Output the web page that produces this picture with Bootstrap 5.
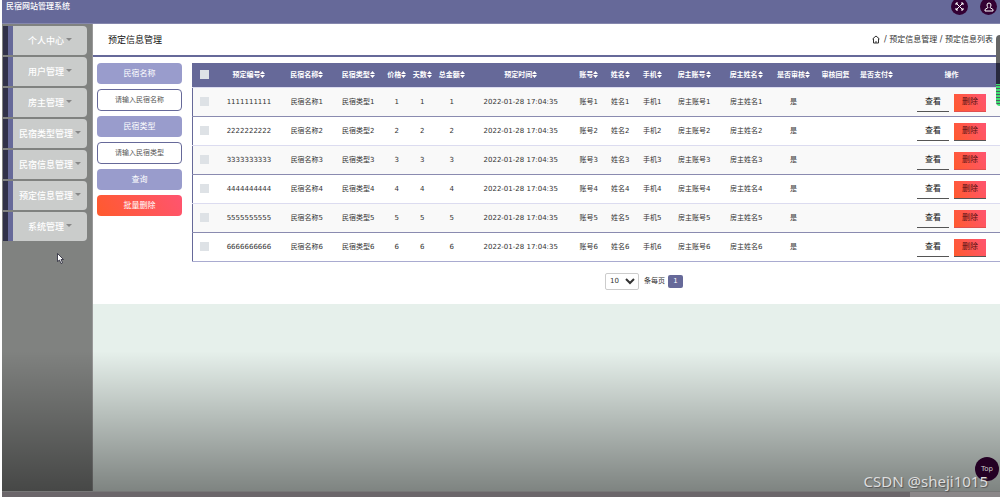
<!DOCTYPE html>
<html lang="zh-CN">
<head>
<meta charset="utf-8">
<meta name="viewport" content="width=device-width, initial-scale=1">
<title>民宿网站管理系统</title>
<link href="https://cdn.jsdelivr.net/npm/bootstrap@5.3.0/dist/css/bootstrap.min.css" rel="stylesheet">
<style>
:root{--brand:#666999;--soft:#999ccc;--plum:#330033}
body{font-family:"DejaVu Sans","Noto Sans CJK SC",sans-serif;font-size:7px;line-height:10px;color:#333;background:#fff}
.shell{min-height:100vh;padding:0 4px 2px 2px;overflow:hidden}
.topbar{background:var(--brand);height:24px;border-bottom:1px solid #8587ad;padding:0 3px 0 4px}
.brand-name{font-size:8px;line-height:14px;font-weight:500;color:#fff}
.tools{gap:12px}
.round-btn,.round-btn:hover{width:17px;height:17px;background:var(--plum);color:#fff;margin-top:-2px}
.side{width:91px;background:#808280;border-right:1px solid #999;padding:2px 5px 0 1px;gap:2px}
.side-link{height:29px;font-size:9px;line-height:12px;font-weight:500;color:#fff;background:#cacccb;border:0;border-left:5px solid var(--brand);border-radius:0 4px 4px 0;flex:1}
.side-item{background:linear-gradient(90deg,#303149 5px,transparent 5px);padding-left:5px}
.side-link::after{color:#888;border-top-width:3px;border-left-width:3px;border-right-width:3px;margin-left:2px}
.panel{background:#fff;padding-bottom:14px}
.crumbs{height:33px;border-bottom:2px solid var(--brand);padding:0 7px 0 15px}
.page-title{font-size:9px;line-height:12px;color:#111}
.crumb-list{font-size:8px;line-height:12px;color:#333}
.crumb-list a{color:#333}
.work{padding:6px 0 0 4px;gap:10px}
.filters{width:85px;gap:5px}
.pill{height:21px;border:0;border-radius:4px;background:var(--soft);color:#fff;font-size:8px;line-height:12px}
.field{height:22px;border:1px solid var(--brand);border-radius:4px;font-size:7px;text-align:center;padding:0 4px;color:#444;width:100%}
.field::placeholder{color:#555}
.danger-fill{background:linear-gradient(60deg,#ff5a2d,#ff5470)}
.orders{table-layout:fixed;width:100%;border-collapse:collapse;text-align:center;border-left:1px solid var(--brand)}
.orders th{background:var(--brand);color:#fff;height:24px;padding:0;white-space:nowrap;font-weight:700}
.orders td{height:29px;padding:0;white-space:nowrap;border-bottom:1px solid #dcdcf0;border-top:1px solid #dcdcf0}
.orders tbody tr:nth-child(odd) td{background:#f9f9f9;border-bottom-color:#8a8bb0}
.orders tbody tr:nth-child(even) td{border-top-color:#8a8bb0}
.orders tbody tr:last-child td{border-bottom-color:#a9abd0}
.orders th:last-child,.orders td:last-child{padding-left:6px}
.tick{appearance:none;width:9px;height:9px;background:#dee2e6;display:block;margin:0 auto}
.sorter{width:5px;height:7px;vertical-align:-1px}
.row-btn{width:32px;height:18px;border:0;border-bottom:1px solid #555;background:transparent;color:#111;font-size:8px;line-height:12px;padding:0}
.row-btn.danger-fill{background:linear-gradient(60deg,#ff5a2d,#ff5470);color:#511}
.orders tbody tr:nth-child(odd) .danger-fill{border-bottom-color:#e05050}
.actions{gap:5px;padding-top:2px}
.pager{margin-top:11px;padding-left:96px}
.size-pick{width:34px;height:17px;font-size:7px;border:1px solid #ccc;border-radius:2px;background:#fff;color:#333;padding:0;margin-right:5px}
.page-no{width:15px;height:13px;border:0;border-radius:2px;background:var(--brand);color:#fff;padding:0;margin-left:3px}
.ground{background:#e6f0eb}
.dim{height:140px;bottom:8px;left:2px;right:4px;background:linear-gradient(rgba(0,0,0,0),rgba(0,0,0,.45));pointer-events:none}
.hbar{height:6px;background:linear-gradient(90deg,#6b666a 91%,#8b8789 91%);border-top:1px solid #777}
.gauge{right:4px;top:35px;width:4px;height:71px;border-radius:4px 0 0 4px;background:linear-gradient(#666 0 28px,#28293d 28px 49px,transparent 49px),repeating-linear-gradient(#3fe070 0 2px,#556 2px 3px)}
.to-top,.to-top:hover{right:5px;bottom:18px;width:24px;height:24px;background:#240024;color:#ccc;font-size:7px;line-height:10px}
.credit{right:16px;bottom:8px;font:15px/20px "Noto Sans",sans-serif;color:#ddd;text-shadow:1px 1px 1px #555}
.pointer{left:57px;top:253px;width:7px;height:11px}
</style>
</head>
<body>
<div class="shell d-flex flex-column position-relative">
  <header class="topbar d-flex justify-content-between align-items-start">
    <span class="brand-name">民宿网站管理系统</span>
    <div class="tools d-flex">
      <button class="round-btn btn rounded-circle p-0 d-flex align-items-center justify-content-center" aria-label="全屏"><svg width="9" height="9" viewBox="0 0 9 9" fill="none" stroke="currentColor"><path d="M1 1l7 7M8 1L1 8M1 3V1h2M6 1h2v2M8 6v2H6M3 8H1V6"/></svg></button>
      <button class="round-btn btn rounded-circle p-0 d-flex align-items-center justify-content-center" aria-label="用户"><svg width="10" height="10" viewBox="0 0 10 10" fill="none" stroke="currentColor"><path d="M5 1a2 2 0 0 1 2 2c0 1-.5 2-1 2.500L9 7.500V9H1V7.500L4 5.500C3.500 5 3 4 3 3a2 2 0 0 1 2-2z"/></svg></button>
    </div>
  </header>
  <div class="d-flex flex-grow-1">
    <nav class="side d-flex flex-column flex-shrink-0" id="side"></nav>
    <main class="ground flex-grow-1 d-flex flex-column">
      <section class="panel">
        <div class="crumbs d-flex justify-content-between align-items-center">
          <h1 class="page-title m-0 fw-normal">预定信息管理</h1>
          <div class="crumb-list d-flex align-items-center gap-1"><a href="#" aria-label="首页" class="d-flex"><svg width="8" height="9" viewBox="0 0 8 9" fill="none" stroke="currentColor"><path d="M.5 4L4 1l3.500 3M1.500 3.500v4.500h5V3.500M4 8V6"/></svg></a><span>/ <a href="#" class="text-decoration-none">预定信息管理</a> / 预定信息列表</span></div>
        </div>
        <div class="d-flex work">
          <form class="filters d-flex flex-column flex-shrink-0">
            <label class="pill d-flex align-items-center justify-content-center" for="f-name">民宿名称</label>
            <input class="field" id="f-name" placeholder="请输入民宿名称">
            <label class="pill d-flex align-items-center justify-content-center" for="f-type">民宿类型</label>
            <input class="field" id="f-type" placeholder="请输入民宿类型">
            <button class="pill" type="button">查询</button>
            <button class="pill danger-fill" type="button">批量删除</button>
          </form>
          <div class="flex-grow-1">
            <table class="orders"><colgroup id="cols"></colgroup><thead><tr id="heads"></tr></thead><tbody id="rows"></tbody></table>
            <div class="pager d-flex justify-content-center align-items-center">
              <select class="size-pick" id="size"><option>10</option></select>
              <label for="size">条每页</label>
              <button class="page-no">1</button>
            </div>
          </div>
        </div>
      </section>
    </main>
  </div>
  <div class="hbar"></div>
  <div class="dim position-absolute"></div>
  <div class="gauge position-absolute"></div>
  <svg class="pointer position-absolute" viewBox="0 0 7 11"><path d="M.5 .5v8l2-1.500L4 10.500l1.500-.7L4 6.500h2.500z" fill="#fff" stroke="#223" stroke-width=".8"/></svg>
  <button class="to-top position-absolute btn rounded-circle p-0 d-flex align-items-center justify-content-center">Top</button>
  <div class="credit position-absolute">CSDN @sheji1015</div>
</div>
<script src="https://cdn.jsdelivr.net/npm/bootstrap@5.3.0/dist/js/bootstrap.bundle.min.js"></script>
<script>
const menu=['个人中心','用户管理','房主管理','民宿类型管理','民宿信息管理','预定信息管理','系统管理'];
document.getElementById('side').innerHTML=menu.map(t=>`<div class="side-item d-flex"><button class="side-link dropdown-toggle p-0">${t}</button></div>`).join('');
const cols=[['',24],['预定编号',65],['民宿名称',51],['民宿类型',52],['价格',25],['天数',26],['总金额',33],['预定时间',105],['账号',31],['姓名',32],['手机',32],['房主账号',52],['房主姓名',52],['是否审核',43],['审核回复',41],['是否支付',41],['操作',0]];
const sorter='<svg class="sorter" viewBox="0 0 5 7" fill="currentColor"><path d="M0 3l2.500-3L5 3zM0 4h5L2.500 7z"/></svg>';
document.getElementById('cols').innerHTML=cols.map(c=>c[1]?`<col style="width:${(c[1]/8.08).toFixed(2)}%">`:'<col>').join('');
document.getElementById('heads').innerHTML=cols.map(([t])=>`<th>${t?t+(t==='操作'||t==='审核回复'?'':sorter):'<input type="checkbox" class="tick" aria-label="全选">'}</th>`).join('');
document.getElementById('rows').innerHTML=[1,2,3,4,5,6].map(n=>{
  const v=[String(n).repeat(10),'民宿名称'+n,'民宿类型'+n,n,n,n,'2022-01-28 17:04:35','账号'+n,'姓名'+n,'手机'+n,'房主账号'+n,'房主姓名'+n,'是','',''];
  return `<tr><td><input type="checkbox" class="tick" aria-label="选择${n}"></td>${v.map(x=>`<td>${x}</td>`).join('')}<td><div class="actions d-flex justify-content-center"><button class="row-btn">查看</button><button class="row-btn danger-fill">删除</button></div></td></tr>`}).join('');
</script>
</body>
</html>
